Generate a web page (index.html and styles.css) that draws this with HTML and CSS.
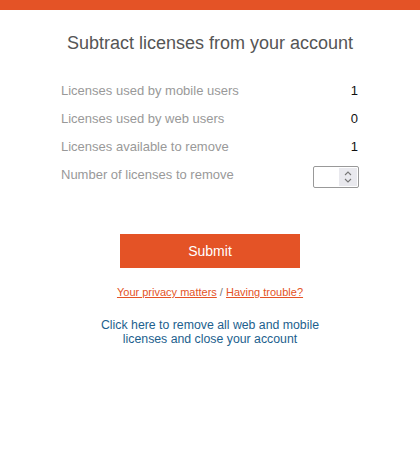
FILE: index.html
```html
<!DOCTYPE html>
<html lang="en">

    <head>
        <meta charset="UTF-8">
        <meta name="viewport" content="width=device-width, initial-scale=1.0">
        <title>Subtract licenses</title>

        <link rel="stylesheet" href="styles.css">
    </head>

    <body>
        <div class="topBar"></div>

        <main>
            <h1>Subtract licenses from your account</h1>

            <div class="rows">
                <div class="row">
                    <span class="label">Licenses used by mobile users</span>
                    <span class="value">1</span>
                </div>
                <div class="row">
                    <span class="label">Licenses used by web users</span>
                    <span class="value">0</span>
                </div>
                <div class="row">
                    <span class="label">Licenses available to remove</span>
                    <span class="value">1</span>
                </div>
                <div class="row inputRow">
                    <label for="remove_count" class="label">Number of licenses to remove</label>
                    <div class="numberBox">
                        <input type="text" name="remove_count" id="remove_count">
                        <div class="spinner">
                            <svg width="8" height="14" viewBox="0 0 8 14">
                                <path d="M1 5 L4 2 L7 5 M1 9 L4 12 L7 9" fill="none" stroke="#777" stroke-width="1.1"/>
                            </svg>
                        </div>
                    </div>
                </div>
            </div>

            <button id="Submit">Submit</button>

            <p class="links">
                <a href="#">Your privacy matters</a> / <a href="#">Having trouble?</a>
            </p>

            <a href="#" class="closeAccount">Click here to remove all web and mobile<br>licenses and close your account</a>
        </main>
    </body>

</html>
```

FILE: styles.css
```css
body {
    font-family: "Liberation Sans", Arial, sans-serif;
    background-color: #fff;
    margin: 0;
    padding: 0;
}

.topBar {
    height: 10px;
    background-color: #e45326;
}

main {
    width: 298px;
    margin: 0 auto;
    display: flex;
    flex-direction: column;
    align-items: center;
}

h1 {
    font-size: 18px;
    font-weight: normal;
    color: #555;
    margin: 23px 0 0;
    white-space: nowrap;
}

.rows {
    width: 100%;
    margin-top: 29px;
    display: flex;
    flex-direction: column;
    gap: 13px;
}

.row {
    display: flex;
    justify-content: space-between;
    align-items: center;
    height: 15px;
    font-size: 13px;
}

.label {
    color: #999;
}

.value {
    color: #111;
    padding-right: 1px;
}

.inputRow {
    align-items: flex-start;
}

.numberBox {
    width: 46px;
    height: 22px;
    box-sizing: border-box;
    border: 1px solid #999;
    border-radius: 2px;
    margin-top: -1px;
    display: flex;
    align-items: center;
    padding: 1px 1px 1px 0;
}

.numberBox input {
    flex: 1;
    min-width: 0;
    height: 100%;
    border: none;
    padding: 0 3px;
    outline: none;
    font-size: 12px;
}

.spinner {
    width: 18px;
    height: 100%;
    background-color: #e9e9ee;
    display: flex;
    align-items: center;
    justify-content: center;
}

button {
    margin-top: 52px;
    width: 180px;
    height: 34px;
    background-color: #e45326;
    color: white;
    border: none;
    font-family: "Liberation Sans", Arial, sans-serif;
    font-size: 14px;
    cursor: pointer;
}

.links {
    margin: 18px 0 0;
    font-size: 11px;
    color: #777;
}

.links a {
    color: #e45326;
}

.closeAccount {
    margin-top: 20px;
    font-size: 12.3px;
    line-height: 14px;
    color: #1d5f8e;
    text-align: center;
    text-decoration: none;
    white-space: nowrap;
}
```
